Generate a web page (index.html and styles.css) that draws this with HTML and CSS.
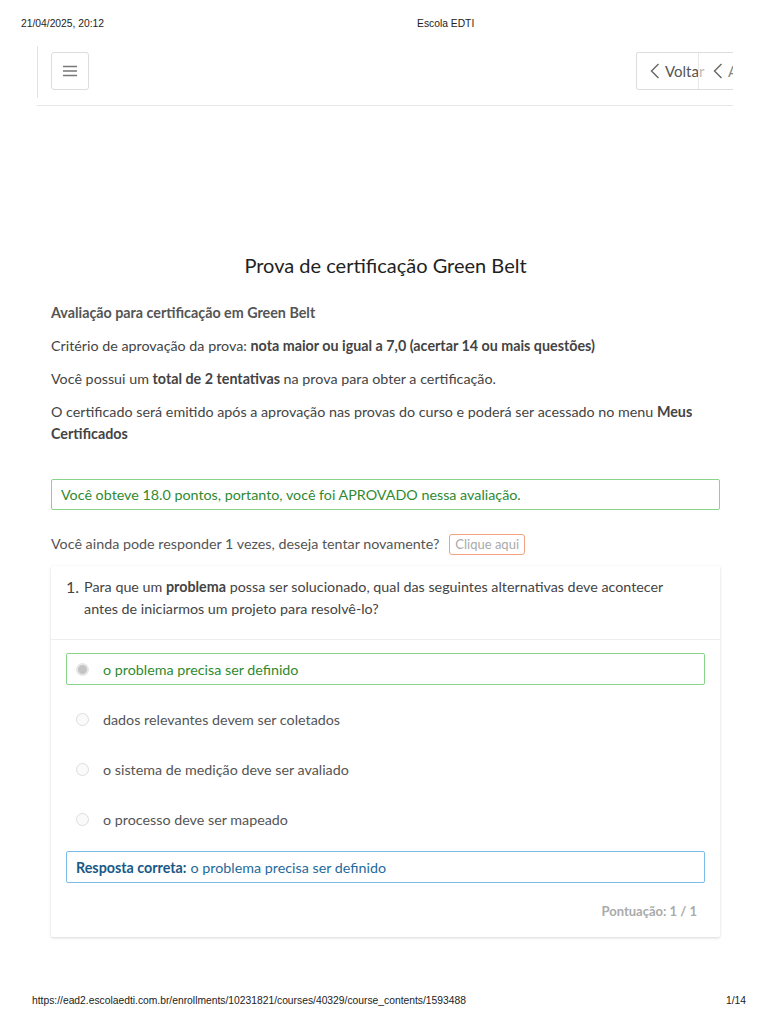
FILE: index.html
```html
<!DOCTYPE html>
<html lang="pt-BR">
<head>
  <meta charset="UTF-8" />
  <meta name="viewport" content="width=device-width, initial-scale=1.0"/>
  <title>Escola EDTI</title>
  <link rel="stylesheet" href="styles.css">
</head>
<body>

<div class="print-head">
  <span>21/04/2025, 20:12</span>
  <span class="print-title">Escola EDTI</span>
</div>

<div class="page">
  <div class="topbar">
    <div class="topbar-left">
      <button class="btn-menu" aria-label="Menu">
        <svg width="14" height="12" viewBox="0 0 14 12">
          <path d="M0 1.5h14M0 6h14M0 10.5h14" stroke="#777" stroke-width="1.6"/>
        </svg>
      </button>
    </div>
    <div class="nav-buttons">
      <button class="btn-nav">
        <svg width="10" height="16" viewBox="0 0 10 16"><path d="M8.5 1L1.5 8l7 7" fill="none" stroke="#666" stroke-width="1.4"/></svg>
        <span>Voltar</span>
      </button>
      <button class="btn-nav">
        <svg width="10" height="16" viewBox="0 0 10 16"><path d="M8.5 1L1.5 8l7 7" fill="none" stroke="#666" stroke-width="1.4"/></svg>
        <span>Avançar</span>
      </button>
    </div>
  </div>

  <div class="content">
    <h1 class="titulo">Prova de certificação Green Belt</h1>

    <p class="subtitulo">Avaliação para certificação em Green Belt</p>
    <p>Critério de aprovação da prova: <span class="medio">nota maior ou igual a 7,0 (acertar 14 ou mais questões)</span></p>
    <p>Você possui um <strong>total de 2 tentativas</strong> na prova para obter a certificação.</p>
    <p>O certificado será emitido após a aprovação nas provas do curso e poderá ser acessado no menu <span class="medio">Meus Certificados</span></p>

    <div class="alerta-ok">Você obteve 18.0 pontos, portanto, você foi APROVADO nessa avaliação.</div>

    <div class="tentar">
      Você ainda pode responder 1 vezes, deseja tentar novamente?
      <button class="btn-clique">Clique aqui</button>
    </div>

    <div class="questao">
      <div class="enunciado">
        <span class="numero">1.</span>
        <span>Para que um <strong>problema</strong> possa ser solucionado, qual das seguintes alternativas deve acontecer antes de iniciarmos um projeto para resolvê-lo?</span>
      </div>

      <div class="alternativas">
        <div class="alternativa certa"><span class="radio marcado"></span>o problema precisa ser definido</div>
        <div class="alternativa"><span class="radio"></span>dados relevantes devem ser coletados</div>
        <div class="alternativa"><span class="radio"></span>o sistema de medição deve ser avaliado</div>
        <div class="alternativa"><span class="radio"></span>o processo deve ser mapeado</div>

        <div class="resposta"><strong>Resposta correta:</strong> o problema precisa ser definido</div>

        <div class="pontuacao">Pontuação: 1 / 1</div>
      </div>
    </div>
  </div>
</div>

<div class="print-foot">
  <span>https://ead2.escolaedti.com.br/enrollments/10231821/courses/40329/course_contents/1593488</span>
  <span>1/14</span>
</div>

</body>
</html>
```

FILE: styles.css
```css
body {
  margin: 0;
  padding: 0;
  background: #fff;
  font-family: Lato, 'Noto Sans', sans-serif;
  color: #444;
  width: 768px;
  height: 1024px;
  position: relative;
  overflow: hidden;
}

/* cabeçalho e rodapé da impressão */
.print-head,
.print-foot {
  display: flex;
  font-family: 'Liberation Sans', Arial, sans-serif;
  font-size: 10.3px;
  color: #222;
}

.print-head {
  height: 46px;
  padding: 18px 0 0 21px;
  box-sizing: border-box;
}

.print-title {
  margin-left: 313px;
}

.print-foot {
  position: absolute;
  left: 0;
  right: 0;
  top: 995px;
  justify-content: space-between;
  padding: 0 22px 0 32px;
}

.page {
  margin: 0 35px 0 37px;
}

/* barra superior */
.topbar {
  display: flex;
  justify-content: space-between;
  height: 59px;
  border-bottom: 1px solid #e6e6e6;
}

.topbar-left {
  border-left: 1px solid #e2e2e2;
  height: 46px;
  padding-left: 13px;
  padding-top: 6px;
}

.btn-menu {
  width: 38px;
  height: 38px;
  border: 1px solid #ddd;
  border-radius: 3px;
  background: #fff;
  display: flex;
  align-items: center;
  justify-content: center;
  padding: 0;
}

.nav-buttons {
  display: flex;
  width: 97px;
  height: 38px;
  margin-top: 6px;
  overflow: hidden;
  border: 1px solid #ddd;
  border-right: none;
  border-radius: 3px 0 0 3px;
  box-sizing: border-box;
}

.btn-nav {
  flex-shrink: 0;
  display: flex;
  align-items: center;
  gap: 5px;
  height: 36px;
  padding: 0 0 0 13px;
  width: 61px;
  background: #fff;
  border: none;
  font-family: Lato, sans-serif;
  font-size: 15px;
  color: #555;
  white-space: nowrap;
  overflow: visible;
}

.btn-nav svg {
  flex-shrink: 0;
}

/* o segundo botão fica por cima do texto do primeiro */
.btn-nav + .btn-nav {
  width: 80px;
  padding-left: 14px;
  background: rgba(255, 255, 255, 0.6);
  border-left: 1px solid #e8e8e8;
  color: #888;
}

/* conteúdo da prova */
.content {
  padding: 0 13px 0 14px;
}

.titulo {
  font-size: 20px;
  font-weight: normal;
  color: #222;
  text-align: center;
  line-height: 28px;
  margin: 145px 0 23px;
}

.content p {
  font-size: 14.3px;
  line-height: 22px;
  margin: 0 0 11px;
}

.subtitulo {
  font-weight: bold;
  color: #555;
}

.medio,
.content strong {
  font-weight: bold;
}

.alerta-ok {
  margin-top: 34px;
  border: 1px solid #88d48a;
  border-radius: 2px;
  color: #2f8a2f;
  font-size: 14.3px;
  line-height: 21px;
  padding: 4px 10px 4px 9px;
}

.tentar {
  margin-top: 23px;
  display: flex;
  align-items: center;
  font-size: 14.3px;
  line-height: 22px;
  color: #555;
}

.btn-clique {
  margin-left: 10px;
  height: 21px;
  padding: 0 5px;
  border: 1px solid #f2a27c;
  border-radius: 3px;
  background: #fff;
  color: #aaa;
  font-family: Lato, sans-serif;
  font-size: 13px;
}

.questao {
  margin-top: 11px;
  border-radius: 2px;
  box-shadow: 0 1px 3px rgba(0, 0, 0, 0.16);
}

.enunciado {
  display: flex;
  gap: 5px;
  padding: 10px 30px 19px 15px;
  border-bottom: 1px solid #eee;
  font-size: 14.3px;
  line-height: 22px;
  color: #444;
}

.numero {
  font-size: 16px;
}

.alternativas {
  padding: 13px 15px 16px;
}

.alternativa {
  display: flex;
  align-items: center;
  height: 32px;
  box-sizing: border-box;
  border: 1px solid transparent;
  border-radius: 2px;
  margin-bottom: 18px;
  padding-left: 9px;
  font-size: 14.3px;
  color: #555;
}

.alternativa:nth-child(4) {
  margin-bottom: 16px;
}

.alternativa.certa {
  border-color: #88d48a;
  color: #2f8a2f;
}

.radio {
  width: 11px;
  height: 11px;
  border-radius: 50%;
  border: 1px solid #ddd;
  background: #fafafa;
  margin-right: 14px;
  flex-shrink: 0;
}

.radio.marcado {
  background: #c4c4c4;
  border: 2px solid #e6e6e6;
  width: 9px;
  height: 9px;
}

.resposta {
  border: 1px solid #7bbde9;
  border-radius: 2px;
  height: 32px;
  box-sizing: border-box;
  padding: 0 9px;
  display: flex;
  align-items: center;
  gap: 4px;
  font-size: 14.3px;
  color: #1f6a9c;
}

.resposta strong {
  color: #175a88;
}

.pontuacao {
  text-align: right;
  margin-top: 18px;
  padding-right: 8px;
  font-size: 13px;
  font-weight: bold;
  color: #aaa;
  line-height: 20px;
}
```
